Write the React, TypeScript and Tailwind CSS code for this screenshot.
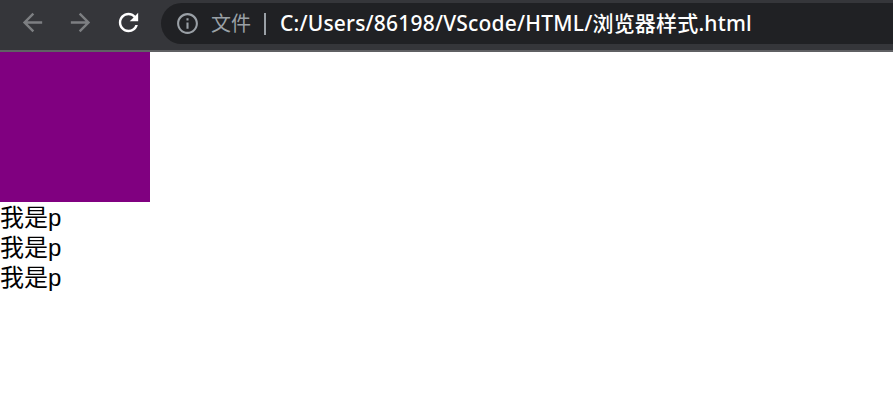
import React from "react";

const Icon = ({ d, className }: { d: string; className: string }) => (
  <svg viewBox="0 0 24 24" className={className} fill="currentColor">
    <path d={d} />
  </svg>
);

export default function App() {
  return (
    <div className="w-[893px] h-[404px] bg-white overflow-hidden" style={{ fontFamily: '"Noto Sans", "Noto Sans CJK SC", sans-serif' }}>
      <div className="h-[50px] bg-[#35363a] flex items-start">
        <div className="flex items-center h-[45px] pl-[18px]">
          <Icon className="w-[29px] h-[29px] text-[#7d7f82]" d="M20 11H7.83l5.59-5.59L12 4l-8 8 8 8 1.41-1.41L7.83 13H20v-2z" />
          <Icon className="w-[29px] h-[29px] text-[#7d7f82] ml-[19px]" d="M12 4l-1.41 1.41L16.17 11H4v2h12.17l-5.58 5.59L12 20l8-8z" />
          <Icon className="w-[29px] h-[29px] text-white ml-[19px]" d="M17.65 6.35C16.2 4.9 14.21 4 12 4c-4.42 0-7.99 3.58-7.99 8s3.57 8 7.99 8c3.73 0 6.84-2.55 7.73-6h-2.08c-.82 2.33-3.04 4-5.65 4-3.31 0-6-2.69-6-6s2.69-6 6-6c1.66 0 3.14.69 4.22 1.78L13 11h7V4l-2.35 2.35z" />
        </div>
        <div className="ml-[18px] mt-[3px] h-[41px] flex-1 bg-[#202124] rounded-l-[21px] flex items-center pl-[14px]">
          <Icon className="w-[25px] h-[25px] text-[#9aa0a6]" d="M11 7h2v2h-2zm0 4h2v6h-2zm1-9C6.48 2 2 6.48 2 12s4.48 10 10 10 10-4.48 10-10S17.52 2 12 2zm0 18c-4.41 0-8-3.59-8-8s3.59-8 8-8 8 3.59 8 8-3.59 8-8 8z" />
          <span className="ml-[11px] text-[20px] text-[#9aa0a6] leading-none">文件</span>
          <span className="ml-[13px] w-[2px] h-[22px] bg-[#9aa0a6]"></span>
          <span className="ml-[14px] text-[21px] font-medium text-white leading-none whitespace-nowrap tracking-[0.2px]">C:/Users/86198/VScode/HTML/浏览器样式.html</span>
        </div>
      </div>
      <div className="h-[2px] bg-[#5f6063]"></div>
      <div className="w-[150px] h-[150px] bg-[#800080]"></div>
      <div className="text-[24px] leading-[30px] text-black pt-[1px]" style={{ fontFamily: '"Liberation Sans", "Noto Sans CJK SC", sans-serif' }}>
        <p>我是p</p>
        <p>我是p</p>
        <p>我是p</p>
      </div>
    </div>
  );
}
